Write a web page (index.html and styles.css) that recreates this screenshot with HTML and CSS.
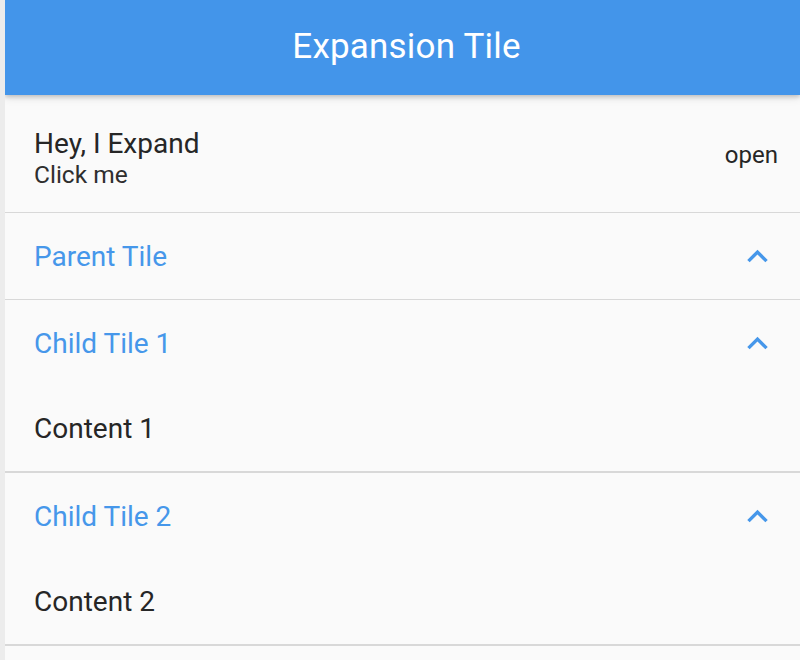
FILE: index.html
```html
<!DOCTYPE html>
<html>
<head>
<meta charset="utf-8">
<link rel="stylesheet" href="styles.css">
</head>
<body>
<div class="page">
  <header class="appbar"><h1 class="appbar-title">Expansion Tile</h1></header>
  <main class="list">
    <div class="tile tile-two">
      <div class="tile-text">
        <div class="tile-title">Hey, I Expand</div>
        <div class="tile-subtitle">Click me</div>
      </div>
      <div class="tile-trailing">open</div>
    </div>
    <section class="exp exp-parent">
      <div class="exp-header">
        <span class="exp-title">Parent Tile</span>
        <svg class="chev" viewBox="0 0 24 24"><path d="M12 8l-6 6 1.41 1.41L12 10.83l4.59 4.58L18 14z"/></svg>
      </div>
      <section class="exp">
        <div class="exp-header">
          <span class="exp-title">Child Tile 1</span>
          <svg class="chev" viewBox="0 0 24 24"><path d="M12 8l-6 6 1.41 1.41L12 10.83l4.59 4.58L18 14z"/></svg>
        </div>
        <div class="content">Content 1</div>
      </section>
      <section class="exp">
        <div class="exp-header">
          <span class="exp-title">Child Tile 2</span>
          <svg class="chev" viewBox="0 0 24 24"><path d="M12 8l-6 6 1.41 1.41L12 10.83l4.59 4.58L18 14z"/></svg>
        </div>
        <div class="content">Content 2</div>
      </section>
    </section>
  </main>
</div>
</body>
</html>
```
FILE: styles.css
```css
html, body {
  margin: 0;
  padding: 0;
  background: #ececec;
  font-family: Roboto, "Noto Sans", sans-serif;
}
.page {
  margin-left: 5px;
  width: 795px;
  height: 660px;
  overflow: hidden;
  background: #fafafa;
  display: flex;
  flex-direction: column;
}
.appbar {
  height: 95px;
  flex: none;
  background: #4395ea;
  display: flex;
  align-items: center;
  justify-content: center;
  position: relative;
  z-index: 1;
  box-shadow: 0 2px 4px rgba(0,0,0,0.18), 0 4px 8px rgba(0,0,0,0.08);
}
.appbar-title {
  margin: 0 0 2px 0;
  color: #ffffff;
  font-weight: 400;
  font-size: 35px;
  line-height: 40px;
  letter-spacing: 0.2px;
  padding-left: 8px;
}
.list {
  display: flex;
  flex-direction: column;
}
.tile {
  display: flex;
  align-items: center;
  justify-content: space-between;
  padding: 0 22px 0 29px;
}
.tile-two {
  height: 117px;
  box-sizing: border-box;
  padding-top: 11px;
}
.tile-title {
  font-size: 28px;
  line-height: 32px;
  color: #262626;
}
.tile-subtitle {
  font-size: 24.5px;
  line-height: 30px;
  color: #2e2e2e;
}
.tile-trailing {
  font-size: 24px;
  line-height: 28px;
  color: #262626;
  margin-bottom: 9px;
}
.exp {
  border-top: 1px solid #d8d8d8;
  border-bottom: 1px solid #d8d8d8;
}
.exp-header {
  height: 86px;
  display: flex;
  align-items: center;
  justify-content: space-between;
  padding: 0 22px 0 29px;
}
.exp-title {
  font-size: 28px;
  line-height: 32px;
  color: #4697ea;
  margin-top: 2px;
}
.chev {
  width: 41px;
  height: 41px;
  fill: #4697ea;
}
.content {
  height: 85px;
  display: flex;
  align-items: center;
  padding-left: 29px;
  font-size: 28px;
  line-height: 32px;
  color: #262626;
}
```
